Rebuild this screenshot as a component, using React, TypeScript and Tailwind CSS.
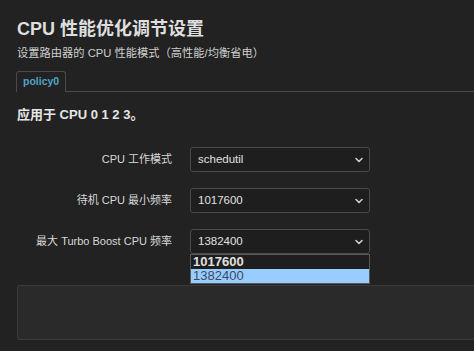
import React from 'react';
import { ChevronDown } from 'lucide-react';

const font = { fontFamily: '"Liberation Sans", "Noto Sans CJK SC", sans-serif' };

interface RowProps {
  label: string;
  value: string;
  children?: React.ReactNode;
}

const SelectRow: React.FC<RowProps> = ({ label, value, children }) => (
  <div className="flex items-center h-[25px] mb-4">
    <label className="w-[156px] pr-[1px] text-right text-[11px] text-[#d8d8d8]">{label}</label>
    <div className="relative ml-[17px]">
      <div className="w-[180px] h-[25px] flex items-center justify-between pl-[7px] pr-[4px] bg-[#1e1e1e] border border-[#4a4a4a] rounded-[3px] text-[11.5px] text-[#e0e0e0]">
        <span>{value}</span>
        <ChevronDown size={12} strokeWidth={3.2} className="text-[#cfcfcf]" />
      </div>
      {children}
    </div>
  </div>
);

export default function App() {
  return (
    <div className="min-h-[351px] bg-[#222222] text-[#dddddd] pl-[17px] pt-[15px] overflow-hidden" style={font}>
      {/* Header */}
      <h2 className="text-[18px] leading-[28px] font-bold text-[#dedede]">CPU 性能优化调节设置</h2>
      <p className="text-[11.25px] leading-[16px] text-[#cfcfcf] mt-[2px]">设置路由器的 CPU 性能模式（高性能/均衡省电）</p>

      {/* Tabs */}
      <div className="flex mt-[10px] -ml-[1px]">
        <div className="h-[21px] px-[6px] flex items-center border border-b-0 border-[#4a4a4a] rounded-t-[3px] text-[10.5px] font-bold text-[#52a2c8]">
          policy0
        </div>
        <div className="flex-1 border-b border-[#4a4a4a]" />
      </div>

      <h3 className="mt-[14px] text-[13px] leading-[18px] font-bold text-[#e6e6e6]">应用于 CPU 0 1 2 3。</h3>

      {/* Settings */}
      <div className="mt-[23px]">
        <SelectRow label="CPU 工作模式" value="schedutil" />
        <SelectRow label="待机 CPU 最小频率" value="1017600" />
        <div className="flex items-center h-[25px]">
          <label className="w-[156px] pr-[1px] text-right text-[11px] text-[#d8d8d8]">最大 Turbo Boost CPU 频率</label>
          <div className="relative ml-[17px]">
            <div className="w-[180px] h-[25px] flex items-center justify-between pl-[7px] pr-[4px] bg-[#1e1e1e] border border-[#4a4a4a] rounded-[3px] text-[11.5px] text-[#e0e0e0]">
              <span>1382400</span>
              <ChevronDown size={12} strokeWidth={3.2} className="text-[#cfcfcf]" />
            </div>
            {/* open option list */}
            <div className="absolute left-0 top-[25px] w-[180px] border border-[#5a5a5a] bg-[#1e1e1e] z-10 text-[13px] leading-[14px]">
              <div className="pl-[2px] font-bold text-[#e0e0e0]">1017600</div>
              <div className="pl-[2px] bg-[#99ccff] text-[#3a4a66]">1382400</div>
            </div>
          </div>
        </div>
      </div>

      {/* Footer panel */}
      <div className="mt-[31px] h-[55px] bg-[#2a2a2a] border-t border-l border-b border-[#3a3a3a] rounded-l-[3px]" />
    </div>
  );
}
